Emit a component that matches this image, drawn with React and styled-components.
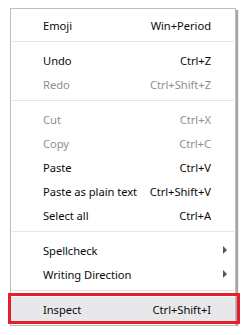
import React from "react";
import styled, { createGlobalStyle } from "styled-components";

const Global = createGlobalStyle`
  body {
    margin: 0;
    background: #ffffff;
    font-family: "Noto Sans", "Open Sans", sans-serif;
  }
`;

const Menu = styled.div`
  margin: 8px 0 0 10px;
  width: 226px;
  box-sizing: border-box;
  border: 1px solid #bdbdbd;
  background: #fff;
  padding: 4px 0;
  box-shadow: 2px 2px 1px rgba(0, 0, 0, 0.35);
`;

const Row = styled.div`
  position: relative;
  display: grid;
  grid-template-columns: 1fr auto 16px;
  align-items: center;
  height: 24px;
  padding: 0 8px 0 32px;
  font-size: 11.2px;
  letter-spacing: -0.05px;
  color: ${({ $disabled }) => ($disabled ? "#8f8f8f" : "#0a0a0a")};
  background: ${({ $active }) => ($active ? "#e8e8eb" : "transparent")};
  white-space: nowrap;

  ${({ $active }) =>
    $active &&
    `
    &::after {
      content: "";
      position: absolute;
      left: -3px;
      right: -5px;
      top: -4px;
      bottom: -3px;
      border: 3px solid #e5202c;
      pointer-events: none;
    }
  `}
`;

const Label = styled.span``;

const Shortcut = styled.span`
  text-align: right;
  padding-left: 8px;
`;

const Arrow = styled.span`
  justify-self: end;
  width: 0;
  height: 0;
  border-top: 4px solid transparent;
  border-bottom: 4px solid transparent;
  border-left: 4px solid #555;
`;

const Separator = styled.div`
  height: 1px;
  background: #e6e6e6;
  margin: 4px 1px 6px;
`;

const groups = [
  [{ label: "Emoji", key: "Win+Period" }],
  [
    { label: "Undo", key: "Ctrl+Z" },
    { label: "Redo", key: "Ctrl+Shift+Z", disabled: true },
  ],
  [
    { label: "Cut", key: "Ctrl+X", disabled: true },
    { label: "Copy", key: "Ctrl+C", disabled: true },
    { label: "Paste", key: "Ctrl+V" },
    { label: "Paste as plain text", key: "Ctrl+Shift+V" },
    { label: "Select all", key: "Ctrl+A" },
  ],
  [
    { label: "Spellcheck", sub: true },
    { label: "Writing Direction", sub: true },
  ],
  [{ label: "Inspect", key: "Ctrl+Shift+I", active: true }],
];

export default function App() {
  return (
    <>
      <Global />
      <Menu>
        {groups.map((items, gi) => (
          <React.Fragment key={gi}>
            {gi > 0 && <Separator />}
            {items.map((it) => (
              <Row key={it.label} $disabled={it.disabled} $active={it.active}>
                <Label>{it.label}</Label>
                <Shortcut>{it.key}</Shortcut>
                {it.sub ? <Arrow /> : <span />}
              </Row>
            ))}
          </React.Fragment>
        ))}
      </Menu>
    </>
  );
}
